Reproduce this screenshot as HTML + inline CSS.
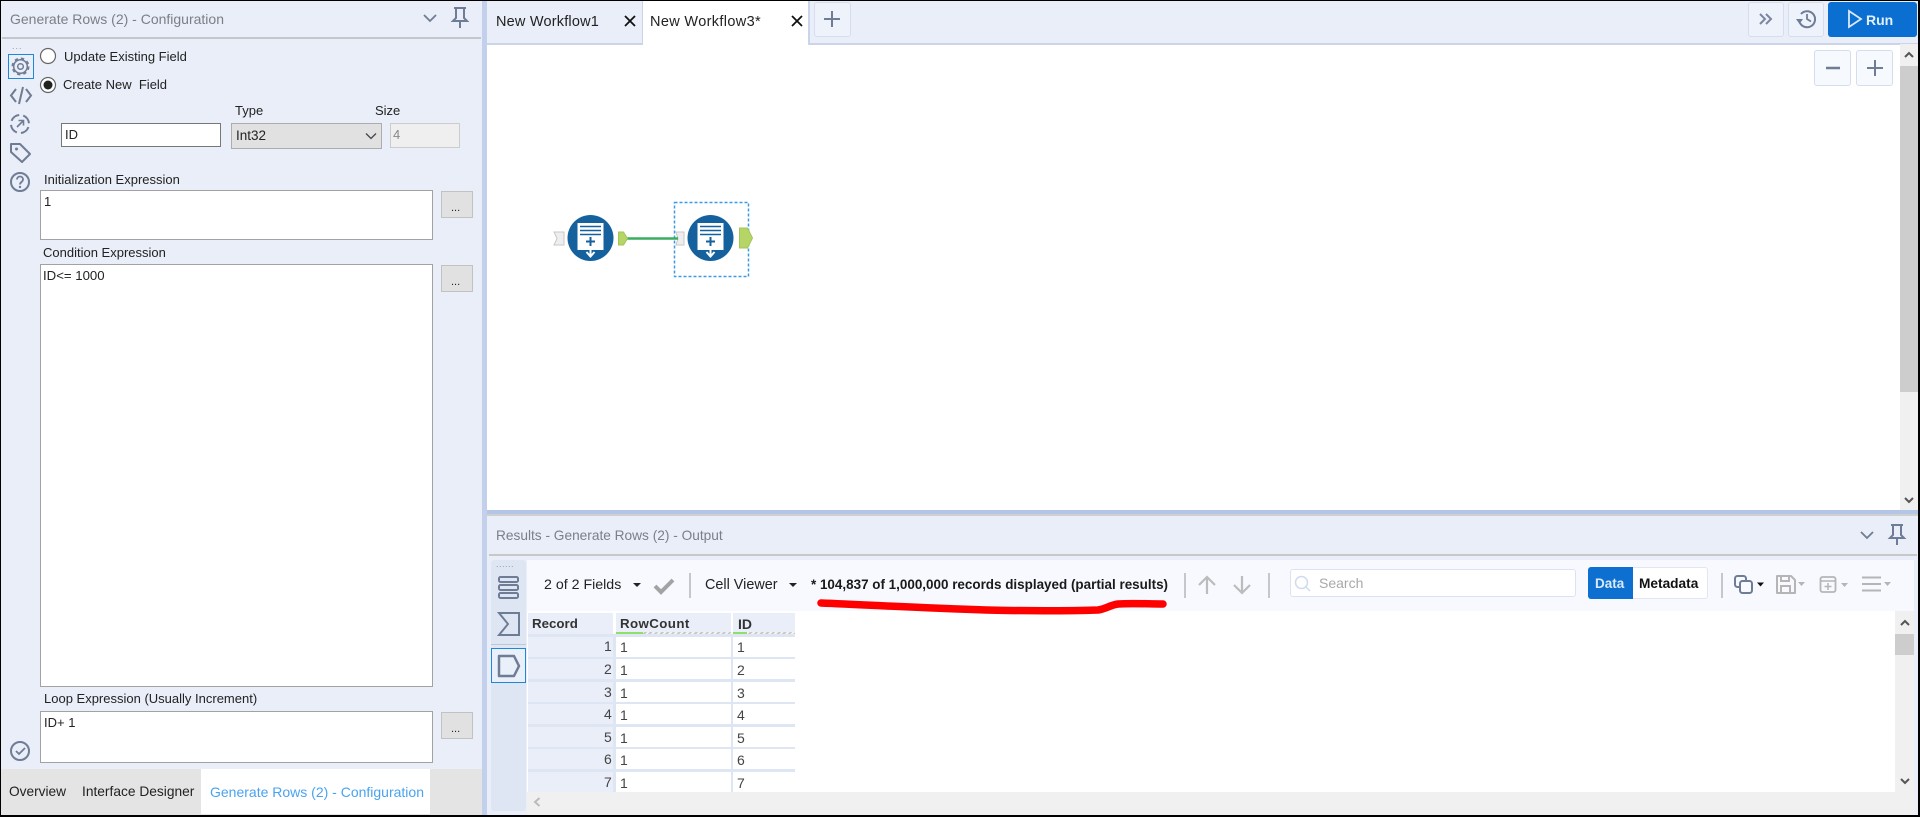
<!DOCTYPE html>
<html><head><meta charset="utf-8"><style>
html,body{margin:0;padding:0;width:1920px;height:817px;overflow:hidden;background:#000}
#r{position:absolute;left:0;top:0;width:1920px;height:817px;overflow:hidden;font-family:"Liberation Sans",sans-serif;font-size:13px;color:#222;filter:blur(.35px)}
#r div,#r span,#r svg{position:absolute}
.t{white-space:nowrap;line-height:16px;height:16px}
.g{background:#e9eef8}
.ta{background:#fff;border:1.5px solid #a2a2a2;box-sizing:border-box}
.b{background:#e1e1e1;border:1.5px solid #c2c2c2;box-sizing:border-box}
.tb{background:#eef2fb;border:1.5px solid #d5deef;border-radius:3px;box-sizing:border-box}
.sep{width:1.5px;background:#c4c8ce}
.c1{background:#e9eef8}
.c2{background:#fff}
.n{font-size:14px;color:#444}
.h{font-weight:bold;font-size:13.3px;color:#333}
</style></head><body><div id="r">
<div style="left:1px;top:1px;width:1917px;height:814px;background:#fff"></div>
<!-- left panel -->
<div class="g" style="left:1px;top:1px;width:481px;height:768px"></div>
<div style="left:2px;top:37px;width:479px;height:1.5px;background:#c4c6cb"></div>
<div style="left:482px;top:1px;width:5px;height:814px;background:#c2d0ec"></div>
<div class="t" style="left:10px;top:11px;font-size:14px;color:#7b7f86">Generate Rows (2) - Configuration</div>
<svg style="left:422px;top:12px" width="16" height="12" viewBox="0 0 16 12"><path d="M2 3l6 6 6-6" fill="none" stroke="#6f7c95" stroke-width="1.8"/></svg>
<svg style="left:450px;top:6px" width="20" height="24" viewBox="0 0 20 24"><path d="M4 2h12M6 2v10L3 15h14l-3-3V2M10 15v7" fill="none" stroke="#6f7c95" stroke-width="2"/></svg>
<div class="t" style="left:12px;top:38px;font-size:9px;letter-spacing:1px;color:#999">...</div>
<div style="left:8px;top:54px;width:26px;height:25px;border:1.5px solid #1f86d8;box-sizing:border-box"></div>
<svg style="left:8px;top:54px" width="26" height="26" viewBox="0 0 26 26"><circle cx="12.5" cy="12.500" r="2.800" fill="none" stroke="#6f7c95" stroke-width="1.500"/><circle cx="12.500" cy="12.500" r="6.800" fill="none" stroke="#6f7c95" stroke-width="1.500"/><circle cx="12.500" cy="12.500" r="8" fill="none" stroke="#6f7c95" stroke-width="2" stroke-dasharray="3.300 3"/></svg>
<svg style="left:8px;top:84px" width="26" height="24" viewBox="0 0 26 24"><path d="M8 5L3 11.500 8 18M18 5l5 6.500L18 18M15 3l-4 17" fill="none" stroke="#6f7c95" stroke-width="2"/></svg>
<svg style="left:8px;top:112px" width="26" height="24" viewBox="0 0 26 24"><circle cx="12" cy="12" r="9" fill="none" stroke="#6f7c95" stroke-width="2" stroke-dasharray="10 4.100" transform="rotate(20 12 12)"/><path d="M9 15l6-6M10.500 8.500H15.500V13.500" fill="none" stroke="#6f7c95" stroke-width="1.600"/></svg>
<svg style="left:8px;top:141px" width="26" height="24" viewBox="0 0 26 24"><path d="M3 3h9l10 10-8 8L3 11z" fill="none" stroke="#6f7c95" stroke-width="2" stroke-linejoin="round"/><circle cx="8.500" cy="8" r="1.500" fill="#6f7c95"/></svg>
<svg style="left:8px;top:170px" width="26" height="24" viewBox="0 0 26 24"><circle cx="12" cy="12" r="9" fill="none" stroke="#6f7c95" stroke-width="2"/><path d="M9 9.500c0-4 6-4 6 0 0 2.500-3 2.500-3 5" fill="none" stroke="#6f7c95" stroke-width="1.800"/><circle cx="12" cy="17" r="1.200" fill="#6f7c95"/></svg>
<svg style="left:8px;top:739px" width="26" height="24" viewBox="0 0 26 24"><circle cx="12" cy="12" r="9" fill="none" stroke="#6f7c95" stroke-width="2"/><path d="M8 12l3 3 6-6" fill="none" stroke="#6f7c95" stroke-width="1.800"/></svg>
<svg style="left:39px;top:47px" width="20" height="50" viewBox="0 0 20 50"><circle cx="9" cy="9" r="7.500" fill="#fff" stroke="#666" stroke-width="1.200"/><circle cx="9" cy="38" r="7.500" fill="#fff" stroke="#666" stroke-width="1.200"/><circle cx="9" cy="38" r="4.500" fill="#222"/></svg>
<div class="t" style="left:64px;top:49px">Update Existing Field</div>
<div class="t" style="left:63px;top:77px">Create New&nbsp; Field</div>
<div class="t" style="left:235px;top:103px">Type</div>
<div class="t" style="left:375px;top:103px">Size</div>
<div style="left:61px;top:123px;width:160px;height:24px;background:#fff;border:1.500px solid #777;box-sizing:border-box"></div>
<div class="t" style="left:65px;top:127px">ID</div>
<div style="left:231px;top:123px;width:151px;height:26px;background:#e1e1e1;border:1.500px solid #adadad;box-sizing:border-box"></div>
<div class="t" style="left:236px;top:128px;font-size:13.500px">Int32</div>
<svg style="left:365px;top:132px" width="12" height="8" viewBox="0 0 12 8"><path d="M1 1.500l5 5 5-5" fill="none" stroke="#444" stroke-width="1.300"/></svg>
<div style="left:390px;top:123px;width:70px;height:25px;background:#efefef;border:1.500px solid #ccc;box-sizing:border-box"></div>
<div class="t" style="left:393px;top:127px;color:#888">4</div>
<div class="t" style="left:44px;top:172px">Initialization Expression</div>
<div class="ta" style="left:40px;top:190px;width:393px;height:50px"></div>
<div class="t" style="left:44px;top:194px">1</div>
<div class="b" style="left:441px;top:191px;width:32px;height:27px"></div>
<div class="t" style="left:451px;top:200px;font-size:11px">...</div>
<div class="t" style="left:43px;top:245px">Condition Expression</div>
<div class="ta" style="left:40px;top:264px;width:393px;height:423px"></div>
<div class="t" style="left:43px;top:268px;font-size:13.200px">ID&lt;= 1000</div>
<div class="b" style="left:441px;top:265px;width:32px;height:27px"></div>
<div class="t" style="left:451px;top:274px;font-size:11px">...</div>
<div class="t" style="left:44px;top:691px">Loop Expression (Usually Increment)</div>
<div class="ta" style="left:40px;top:711px;width:393px;height:52px"></div>
<div class="t" style="left:44px;top:715px">ID+ 1</div>
<div class="b" style="left:441px;top:712px;width:32px;height:27px"></div>
<div class="t" style="left:451px;top:721px;font-size:11px">...</div>
<!-- bottom tabs -->
<div style="left:1px;top:769px;width:481px;height:46px;background:#e4e4e4"></div>
<div style="left:201px;top:769px;width:229px;height:45px;background:#fff"></div>
<div class="t" style="left:9px;top:784px;font-size:13.700px">Overview</div>
<div class="t" style="left:82px;top:784px;font-size:13.750px">Interface Designer</div>
<div class="t" style="left:210px;top:784px;color:#4aa3ef;font-size:14px">Generate Rows (2) - Configuration</div>
<!-- top tab strip -->
<div class="g" style="left:487px;top:1px;width:1431px;height:42px"></div>
<div style="left:487px;top:43px;width:1431px;height:1.500px;background:#cad5ea"></div>
<div style="left:642px;top:1px;width:1.500px;height:43px;background:#cad5ea"></div>
<div style="left:643px;top:1px;width:165px;height:44px;background:#fff"></div>
<div style="left:808px;top:1px;width:1.500px;height:43px;background:#cad5ea"></div>
<div class="t" style="left:496px;top:14px;font-size:14.500px;letter-spacing:.2px">New Workflow1</div>
<div class="t" style="left:650px;top:14px;font-size:14.500px;letter-spacing:.35px">New Workflow3*</div>
<svg style="left:623px;top:14px" width="14" height="14" viewBox="0 0 14 14"><path d="M2 2l10 10M12 2L2 12" stroke="#111" stroke-width="1.800"/></svg>
<svg style="left:790px;top:14px" width="14" height="14" viewBox="0 0 14 14"><path d="M2 2l10 10M12 2L2 12" stroke="#111" stroke-width="1.800"/></svg>
<div class="tb" style="left:814px;top:2px;width:37px;height:35px"></div>
<svg style="left:822px;top:9px" width="20" height="20" viewBox="0 0 20 20"><path d="M10 2v16M2 10h16" stroke="#6f7c95" stroke-width="2"/></svg>
<div class="tb" style="left:1748px;top:2px;width:36px;height:35px"></div>
<svg style="left:1758px;top:12px" width="16" height="14" viewBox="0 0 16 14"><path d="M2 2l5 5-5 5M8 2l5 5-5 5" fill="none" stroke="#7b86a0" stroke-width="2"/></svg>
<div class="tb" style="left:1788px;top:2px;width:36px;height:35px"></div>
<svg style="left:1796px;top:8px" width="22" height="22" viewBox="0 0 22 22"><path d="M5 6a8 8 0 1 1-1 9" fill="none" stroke="#6f7c95" stroke-width="2"/><path d="M11 6v5l4 2.500" fill="none" stroke="#6f7c95" stroke-width="1.800"/><path d="M0 11h7l-3.500 5z" fill="#6f7c95"/></svg>
<div style="left:1828px;top:2px;width:89px;height:35px;background:#0a6fd1;border-radius:3px"></div>
<svg style="left:1846px;top:9px" width="18" height="20" viewBox="0 0 18 20"><path d="M3 2l12 8-12 8z" fill="none" stroke="#dbe9f8" stroke-width="1.800"/></svg>
<div class="t" style="left:1866px;top:12px;color:#e4effa;font-weight:bold;font-size:14px">Run</div>
<!-- canvas controls -->
<div class="tb" style="left:1814px;top:50px;width:37px;height:36px;background:#f6f9fe"></div>
<svg style="left:1824px;top:59px" width="18" height="18" viewBox="0 0 18 18"><path d="M2 9h14" stroke="#6f7c95" stroke-width="2.500"/></svg>
<div class="tb" style="left:1856px;top:50px;width:37px;height:36px;background:#f6f9fe"></div>
<svg style="left:1866px;top:59px" width="18" height="18" viewBox="0 0 18 18"><path d="M9 1v16M1 9h16" stroke="#6f7c95" stroke-width="2"/></svg>
<!-- canvas scrollbar -->
<div style="left:1900px;top:44px;width:18px;height:466px;background:#f0f0f0"></div>
<div style="left:1900px;top:66px;width:18px;height:326px;background:#cdcdcd"></div>
<svg style="left:1903px;top:50px" width="12" height="10" viewBox="0 0 12 10"><path d="M2 7l4-4 4 4" fill="none" stroke="#555" stroke-width="2"/></svg>
<svg style="left:1903px;top:495px" width="12" height="10" viewBox="0 0 12 10"><path d="M2 3l4 4 4-4" fill="none" stroke="#555" stroke-width="2"/></svg>
<!-- workflow -->
<svg style="left:540px;top:190px" width="230" height="100" viewBox="540 190 230 100">
<rect x="674.500" y="202.500" width="74" height="74" fill="none" stroke="#3b9ae8" stroke-width="1.500" stroke-dasharray="3 2"/>
<path d="M554 232h10v13h-10l3-6.500z" fill="#eee" stroke="#c8c8c8"/>
<path d="M676 232h8v13h-8l2-6.500z" fill="#eee" stroke="#c8c8c8"/>
<path d="M627 238.500H678" stroke="#3aae5e" stroke-width="2.500"/>
<path d="M618.500 232h5l4 6.500-4 6.500h-5z" fill="#b5d566" stroke="#a4c455"/>
<path d="M739.500 228h8l5 10-5 10h-8z" fill="#b5d566" stroke="#a4c455"/>
<g><circle cx="590.500" cy="238" r="23" fill="#14619e"/>
<rect x="577.500" y="223" width="26" height="27" fill="#fff"/>
<path d="M580 226.500h21M580 230.500h21M580 234.500h21" stroke="#14619e" stroke-width="1.500"/>
<path d="M590.500 237v9M586 241.500h9" stroke="#14619e" stroke-width="2"/>
<path d="M590.500 248v8M586.500 252l4 4.500 4-4.500" fill="none" stroke="#fff" stroke-width="2"/></g>
<g transform="translate(120 0)"><circle cx="590.500" cy="238" r="23" fill="#14619e"/>
<rect x="577.500" y="223" width="26" height="27" fill="#fff"/>
<path d="M580 226.500h21M580 230.500h21M580 234.500h21" stroke="#14619e" stroke-width="1.500"/>
<path d="M590.500 237v9M586 241.500h9" stroke="#14619e" stroke-width="2"/>
<path d="M590.500 248v8M586.500 252l4 4.500 4-4.500" fill="none" stroke="#fff" stroke-width="2"/></g>
</svg>
<!-- results header -->
<div style="left:487px;top:510px;width:1431px;height:4px;background:#b4c6e7"></div>
<div style="left:487px;top:514px;width:1431px;height:2px;background:#d0d0d0"></div>
<div class="g" style="left:487px;top:516px;width:1431px;height:299px"></div>
<div style="left:489px;top:554px;width:1428px;height:1.500px;background:#c8c8c8"></div>
<div class="t" style="left:496px;top:528px;font-size:13.700px;color:#7b7f86">Results - Generate Rows (2) - Output</div>
<svg style="left:1859px;top:529px" width="16" height="12" viewBox="0 0 16 12"><path d="M2 3l6 6 6-6" fill="none" stroke="#6f7c95" stroke-width="1.800"/></svg>
<svg style="left:1887px;top:523px" width="20" height="24" viewBox="0 0 20 24"><path d="M4 2h12M6 2v10L3 15h14l-3-3V2M10 15v7" fill="none" stroke="#6f7c95" stroke-width="2"/></svg>
<!-- sidebar -->
<div style="left:491px;top:560px;width:35px;height:251px;background:#dfe6f3;border-radius:3px"></div>
<div class="t" style="left:496px;top:556px;font-size:9px;letter-spacing:.5px;color:#999">......</div>
<svg style="left:497px;top:575px" width="24" height="26" viewBox="0 0 24 26"><rect x="2" y="2" width="19" height="5" rx="1.500" fill="none" stroke="#6f7c95" stroke-width="2"/><rect x="2" y="10" width="19" height="5" rx="1.500" fill="none" stroke="#6f7c95" stroke-width="2"/><rect x="2" y="18" width="19" height="5" rx="1.500" fill="none" stroke="#6f7c95" stroke-width="2"/></svg>
<svg style="left:497px;top:611px" width="24" height="26" viewBox="0 0 24 26"><path d="M2 2h20v22H2l9-11z" fill="none" stroke="#6f7c95" stroke-width="2"/></svg>
<div style="left:491px;top:644px;width:35px;height:1px;background:#c0c6d2"></div>
<div style="left:491px;top:648px;width:35px;height:34.500px;background:#eaf0fa;border:1.500px solid #1f86d8;box-sizing:border-box"></div>
<svg style="left:497px;top:654px" width="26" height="24" viewBox="0 0 26 24"><path d="M2 2h15l5 10-5 10H2z" fill="none" stroke="#6f7c95" stroke-width="2.500" stroke-linejoin="round"/></svg>
<!-- toolbar -->
<div style="left:527px;top:560px;width:1387px;height:51px;background:#f7f9fe"></div>
<div class="t" style="left:544px;top:577px;font-size:14.200px">2 of 2 Fields</div>
<svg style="left:633px;top:583px" width="9" height="5"><path d="M0 0h8l-4 4z" fill="#222"/></svg>
<svg style="left:652px;top:576px" width="24" height="20" viewBox="0 0 24 20"><path d="M3 10l6 6L21 4" fill="none" stroke="#a3a3a3" stroke-width="4"/></svg>
<div class="sep" style="left:689px;top:573px;height:25px"></div>
<div class="t" style="left:705px;top:577px;font-size:14.400px">Cell Viewer</div>
<svg style="left:789px;top:583px" width="9" height="5"><path d="M0 0h8l-4 4z" fill="#222"/></svg>
<div class="t" style="left:811px;top:577px;font-weight:bold;font-size:13.450px;color:#1a1a1a">* 104,837 of 1,000,000 records displayed (partial results)</div>
<div class="sep" style="left:1184px;top:573px;height:25px"></div>
<svg style="left:1197px;top:574px" width="20" height="22" viewBox="0 0 20 22"><path d="M10 20V3M2 11l8-8 8 8" fill="none" stroke="#bcbcbc" stroke-width="2.200"/></svg>
<svg style="left:1232px;top:574px" width="20" height="22" viewBox="0 0 20 22"><path d="M10 2v17M2 11l8 8 8-8" fill="none" stroke="#bcbcbc" stroke-width="2.200"/></svg>
<div class="sep" style="left:1268px;top:573px;height:25px"></div>
<div style="left:1290px;top:569px;width:286px;height:28px;background:#fff;border:1.500px solid #dbe3f2;border-radius:3px;box-sizing:border-box"></div>
<svg style="left:1293px;top:574px" width="20" height="20" viewBox="0 0 20 20"><circle cx="8.500" cy="8.500" r="6" fill="none" stroke="#cfdbee" stroke-width="1.500"/><path d="M13 13l4 4" stroke="#cfdbee" stroke-width="1.500"/></svg>
<div class="t" style="left:1319px;top:575px;font-size:14px;color:#a9a9a9">Search</div>
<div style="left:1588px;top:567px;width:45px;height:32px;background:#0d6fd0;border-radius:3px 0 0 3px"></div>
<div style="left:1633px;top:567px;width:75px;height:32px;background:#fff;border:1.500px solid #e0e6f2;border-left:0;border-radius:0 3px 3px 0;box-sizing:border-box"></div>
<div class="t" style="left:1595px;top:576px;font-weight:bold;font-size:13.500px;color:#dcebfa">Data</div>
<div class="t" style="left:1639px;top:576px;font-weight:bold;font-size:13.700px;color:#111">Metadata</div>
<div class="sep" style="left:1721px;top:573px;height:25px"></div>
<svg style="left:1733px;top:574px" width="34" height="22" viewBox="0 0 34 22"><rect x="2" y="2" width="11" height="11" rx="2.500" fill="none" stroke="#6f7c95" stroke-width="2"/><rect x="7" y="7" width="12" height="12" rx="2.500" fill="#f7f9fe" stroke="#6f7c95" stroke-width="2"/><path d="M24 8.500h7l-3.500 4z" fill="#111"/></svg>
<svg style="left:1775px;top:574px" width="32" height="22" viewBox="0 0 32 22"><path d="M2 2h14l4 4v13H2z" fill="none" stroke="#b5b5b5" stroke-width="2" stroke-linejoin="round"/><path d="M6 2v5h8V2M6 19v-7h9v7" fill="none" stroke="#b5b5b5" stroke-width="2"/><path d="M23 8h7l-3.500 4z" fill="#b5b5b5"/></svg>
<svg style="left:1819px;top:575px" width="32" height="20" viewBox="0 0 32 20"><rect x="1.500" y="2" width="15" height="15" rx="2" fill="none" stroke="#b5b5b5" stroke-width="1.800"/><path d="M2 6h14M9 8v7M5.500 11.500h7" fill="none" stroke="#b5b5b5" stroke-width="1.500"/><path d="M22 8h7l-3.500 4z" fill="#b5b5b5"/></svg>
<svg style="left:1861px;top:575px" width="32" height="18" viewBox="0 0 32 18"><path d="M1 2.500h19M1 9h19M1 15.500h19" stroke="#b5b5b5" stroke-width="2"/><path d="M23 7h7l-3.500 4z" fill="#b5b5b5"/></svg>
<!-- grid white -->
<div style="left:527px;top:611px;width:1368px;height:181px;background:#fff"></div>
<div class="c1" style="left:528px;top:613px;width:85px;height:21px"></div>
<div class="c1" style="left:616px;top:613px;width:115px;height:21px"></div>
<div class="c1" style="left:733px;top:613px;width:62px;height:21px"></div>
<div class="t h" style="left:532px;top:616px">Record</div>
<div class="t h" style="left:620px;top:616px;letter-spacing:.4px">RowCount</div>
<div class="t h" style="left:738px;top:616px;font-size:14px">ID</div>
<div style="left:616px;top:632px;width:115px;height:2px;background:repeating-linear-gradient(135deg,#c8c8c8 0 2px,#f4f4f4 2px 4px)"></div>
<div style="left:733px;top:632px;width:62px;height:2px;background:repeating-linear-gradient(135deg,#c8c8c8 0 2px,#f4f4f4 2px 4px)"></div>
<div style="left:616px;top:632px;width:27px;height:2px;background:#8fe06a"></div>
<div style="left:733px;top:632px;width:14px;height:2px;background:#8fe06a"></div>
<!-- grid lines -->
<div style="left:528px;top:634px;width:267px;height:158px;background:#dfe6f3"></div>
<div class="c1" style="left:528px;top:637px;width:85px;height:20px"></div><div class="c2" style="left:616px;top:637px;width:115px;height:20px"></div><div class="c2" style="left:733px;top:637px;width:62px;height:20px"></div>
<div class="c1" style="left:528px;top:659px;width:85px;height:20px"></div><div class="c2" style="left:616px;top:659px;width:115px;height:20px"></div><div class="c2" style="left:733px;top:659px;width:62px;height:20px"></div>
<div class="c1" style="left:528px;top:682px;width:85px;height:20px"></div><div class="c2" style="left:616px;top:682px;width:115px;height:20px"></div><div class="c2" style="left:733px;top:682px;width:62px;height:20px"></div>
<div class="c1" style="left:528px;top:704px;width:85px;height:20px"></div><div class="c2" style="left:616px;top:704px;width:115px;height:20px"></div><div class="c2" style="left:733px;top:704px;width:62px;height:20px"></div>
<div class="c1" style="left:528px;top:727px;width:85px;height:20px"></div><div class="c2" style="left:616px;top:727px;width:115px;height:20px"></div><div class="c2" style="left:733px;top:727px;width:62px;height:20px"></div>
<div class="c1" style="left:528px;top:749px;width:85px;height:20px"></div><div class="c2" style="left:616px;top:749px;width:115px;height:20px"></div><div class="c2" style="left:733px;top:749px;width:62px;height:20px"></div>
<div class="c1" style="left:528px;top:772px;width:85px;height:20px"></div><div class="c2" style="left:616px;top:772px;width:115px;height:20px"></div><div class="c2" style="left:733px;top:772px;width:62px;height:20px"></div>
<div class="t n" style="left:604px;top:638px">1</div><div class="t n" style="left:620px;top:639px">1</div><div class="t n" style="left:737px;top:639px">1</div>
<div class="t n" style="left:604px;top:661px">2</div><div class="t n" style="left:620px;top:662px">1</div><div class="t n" style="left:737px;top:662px">2</div>
<div class="t n" style="left:604px;top:684px">3</div><div class="t n" style="left:620px;top:685px">1</div><div class="t n" style="left:737px;top:685px">3</div>
<div class="t n" style="left:604px;top:706px">4</div><div class="t n" style="left:620px;top:707px">1</div><div class="t n" style="left:737px;top:707px">4</div>
<div class="t n" style="left:604px;top:729px">5</div><div class="t n" style="left:620px;top:730px">1</div><div class="t n" style="left:737px;top:730px">5</div>
<div class="t n" style="left:604px;top:751px">6</div><div class="t n" style="left:620px;top:752px">1</div><div class="t n" style="left:737px;top:752px">6</div>
<div class="t n" style="left:604px;top:774px">7</div><div class="t n" style="left:620px;top:775px">1</div><div class="t n" style="left:737px;top:775px">7</div>
<!-- scrollbars -->
<div style="left:527px;top:792px;width:1388px;height:23px;background:#f0f0f0"></div>
<svg style="left:532px;top:796px" width="10" height="12" viewBox="0 0 10 12"><path d="M7.500 2L3 6l4.500 4" fill="none" stroke="#bbb" stroke-width="2"/></svg>
<div style="left:1895px;top:611px;width:19px;height:181px;background:#f0f0f0"></div>
<div style="left:1895px;top:634px;width:19px;height:21px;background:#cdcdcd"></div>
<svg style="left:1899px;top:618px" width="12" height="10" viewBox="0 0 12 10"><path d="M2 7l4-4 4 4" fill="none" stroke="#555" stroke-width="2"/></svg>
<svg style="left:1899px;top:776px" width="12" height="10" viewBox="0 0 12 10"><path d="M2 3l4 4 4-4" fill="none" stroke="#555" stroke-width="2"/></svg>
<!-- red annotation -->
<svg style="left:800px;top:590px" width="380" height="30" viewBox="800 590 380 30"><path d="M821 603c50 2 100 5 165 7 40 1 80 1 112 0 8-1 12-5 20-6 14-1 30 0 45 0" fill="none" stroke="#f00" stroke-width="7.500" stroke-linecap="round"/></svg>
</div></body></html>
